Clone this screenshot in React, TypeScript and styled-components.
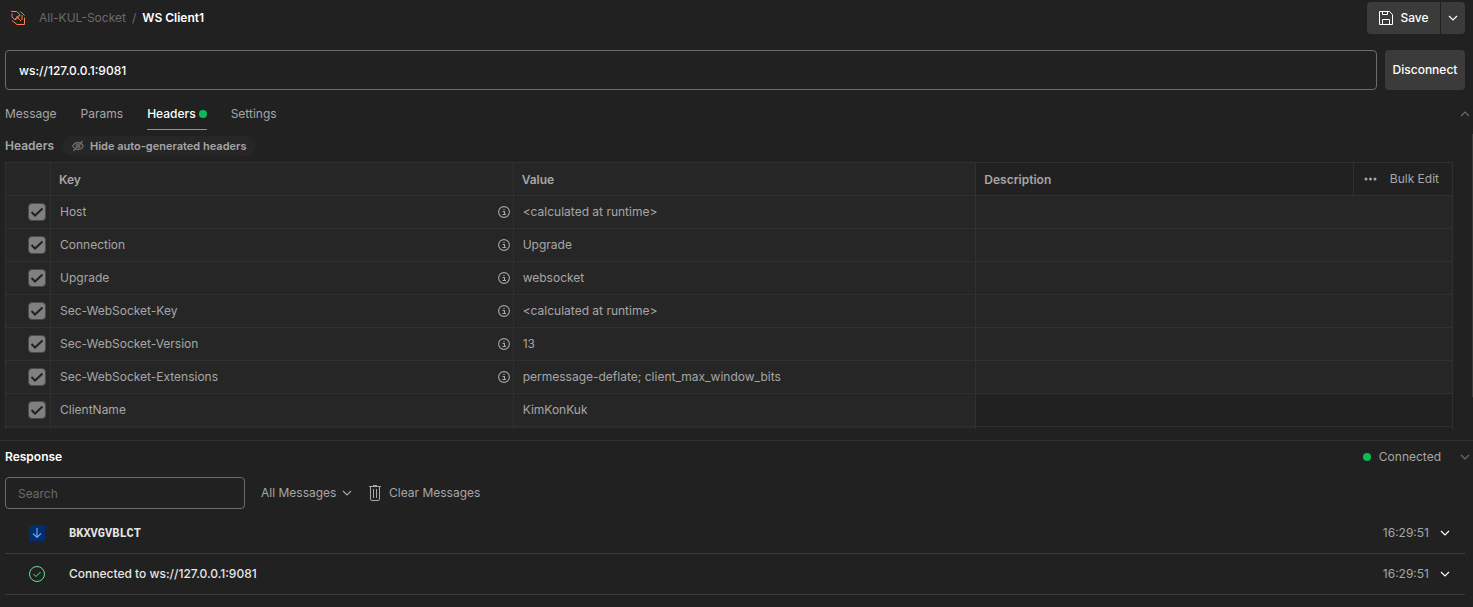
import React from 'react';
import styled, { createGlobalStyle } from 'styled-components';

const GlobalStyle = createGlobalStyle`
  *, *::before, *::after { box-sizing: border-box; }
  html { background: #212121; }
  body {
    margin: 0;
    background: #212121;
    color: #a6a6a6;
    font: 12px/20px Inter, "Liberation Sans", sans-serif;
    overflow: hidden;
  }
  button, input, select {
    font: inherit;
    color: inherit;
    background: none;
    border: 0;
    margin: 0;
    padding: 0;
  }
  button { cursor: pointer; }
  svg { display: block; flex: none; }
  h2 { margin: 0; font-size: 12px; font-weight: 600; }
`;

const Page = styled.main`
  display: flex;
  flex-direction: column;
`;

const TopBar = styled.header`
  display: flex;
  align-items: center;
  justify-content: space-between;
  height: 36px;
  padding: 0 8px 0 10px;
`;

const Breadcrumb = styled.nav`
  display: flex;
  align-items: center;
`;

const CrumbLink = styled.a`
  margin-left: 13px;
  color: #6b6b6b;
  text-decoration: none;
`;

const Slash = styled.span`
  margin: 0 6px;
  color: #6b6b6b;
`;

const Current = styled.span`
  color: #fff;
  font-weight: 600;
`;

const SaveGroup = styled.div`
  display: flex;
  gap: 1px;
`;

const SolidButton = styled.button<{ $w: number; $h: number; $radius: string }>`
  display: flex;
  align-items: center;
  justify-content: center;
  gap: 6px;
  flex: none;
  width: ${(p) => p.$w}px;
  height: ${(p) => p.$h}px;
  border-radius: ${(p) => p.$radius};
  background: #3b3b3b;
  color: #fff;
  font-weight: 500;
`;

const UrlRow = styled.form`
  display: flex;
  gap: 8px;
  padding: 14px 8px 0 5px;
`;

const TextInput = styled.input<{ $strong?: boolean }>`
  min-width: 0;
  flex: ${(p) => (p.$strong ? '1' : '0 0 240px')};
  height: ${(p) => (p.$strong ? 40 : 32)}px;
  padding: 0 ${(p) => (p.$strong ? 13 : 12)}px;
  border: 1px solid #6b6b6b;
  border-radius: 4px;
  color: #fff;
  font-weight: ${(p) => (p.$strong ? 500 : 400)};
  &::placeholder { color: #6b6b6b; opacity: 1; }
`;

const TabBar = styled.div`
  display: flex;
  align-items: center;
  justify-content: space-between;
  height: 40px;
  margin-top: 4px;
  padding: 0 3px 0 5px;
`;

const Tabs = styled.div`
  display: flex;
  gap: 24px;
`;

const Tab = styled.button<{ $active?: boolean }>`
  display: flex;
  align-items: center;
  gap: 3px;
  height: 32px;
  border-bottom: 1px solid ${(p) => (p.$active ? '#ff6c37' : 'transparent')};
  color: ${(p) => (p.$active ? '#fff' : '#a6a6a6')};
  font-weight: ${(p) => (p.$active ? 500 : 400)};
`;

const Dot = styled.span`
  width: 8px;
  height: 8px;
  border-radius: 50%;
  background: #0cbb52;
`;

const IconButton = styled.button<{ $color?: string }>`
  color: ${(p) => p.$color ?? '#6b6b6b'};
`;

const ScrollArea = styled.section`
  position: relative;
  &::after {
    content: "";
    position: absolute;
    top: 0;
    right: 0;
    width: 1px;
    height: 89%;
    background: #3b3b3b;
  }
`;

const HeadersTitle = styled.div`
  display: flex;
  align-items: center;
  gap: 8px;
  height: 28px;
  padding: 0 0 4px 5px;
`;

const Pill = styled.button`
  display: flex;
  align-items: center;
  gap: 6px;
  height: 20px;
  padding: 0 10px;
  border-radius: 10px;
  background: #262626;
  font-size: 11px;
  font-weight: 600;
  svg { color: #6b6b6b; }
`;

const TablePane = styled.div`
  display: flex;
  align-items: flex-start;
  max-height: 267px;
  padding: 0 20px 0 5px;
  overflow: hidden;
`;

const HeaderTable = styled.table`
  width: 100%;
  table-layout: fixed;
  border-collapse: collapse;
`;

const Cell = styled.td<{ $plain?: boolean }>`
  height: 33px;
  padding: 0 3px 0 9px;
  border: 1px solid #303030;
  background: ${(p) => (p.$plain ? '#212121' : '#262626')};
`;

const CheckCell = styled(Cell)`
  padding: 0 5px 0 22px;
`;

const HeadCell = styled.th<{ $plain?: boolean }>`
  height: 33px;
  padding: 2px 8px 0;
  border: 1px solid #303030;
  background: ${(p) => (p.$plain ? '#212121' : '#262626')};
  font-weight: 600;
  text-align: left;
`;

const ToolsCell = styled(HeadCell)`
  padding: 0 13px 0 10px;
`;

const Spread = styled.div`
  display: flex;
  align-items: center;
  justify-content: space-between;
`;

const QuietButton = styled.button`
  display: flex;
  align-items: center;
  gap: 8px;
  font-weight: 400;
`;

const Checkbox = styled.input`
  appearance: none;
  display: block;
  width: 18px;
  height: 18px;
  border: 1px solid #4a4a4a;
  border-radius: 4px;
  background: #808080;
`;

const CheckBoxWrap = styled.label`
  display: grid;
  width: 18px;
  > * { grid-area: 1 / 1; }
  svg { place-self: center; color: #212121; pointer-events: none; }
`;

const ResponsePane = styled.section`
  margin-top: 11px;
  border-top: 1px solid #303030;
`;

const ResponseBar = styled.div`
  display: flex;
  align-items: center;
  justify-content: space-between;
  height: 32px;
  padding: 0 3px 0 5px;
  h2 { color: #fff; }
`;

const Status = styled.div`
  display: flex;
  align-items: center;
  gap: 8px;
  button { margin-left: 11px; }
`;

const Filters = styled.div`
  display: flex;
  align-items: center;
  padding: 4px 5px;
`;

const SelectWrap = styled.div`
  display: flex;
  align-items: center;
  margin: 0 17px 0 16px;
  svg { margin-left: -10px; pointer-events: none; }
`;

const Select = styled.select`
  appearance: none;
  padding-right: 15px;
`;

const MessageList = styled.ul`
  list-style: none;
  margin: 0 8px 0 5px;
  padding: 0;
`;

const MessageRow = styled.li`
  display: flex;
  align-items: center;
  height: 41px;
  padding: 0 15px 0 24px;
  border-bottom: 1px solid #3b3b3b;
`;

const MessageText = styled.span<{ $mono?: boolean }>`
  flex: 1;
  margin-left: 24px;
  color: #e6e6e6;
  font-weight: ${(p) => (p.$mono ? 700 : 500)};
  ${(p) => p.$mono && 'padding-top: 2px; font-family: "Liberation Mono", monospace;'}
`;

const Time = styled.time`
  margin-right: 11px;
`;

const Received = styled.span`
  display: grid;
  place-items: center;
  width: 16px;
  height: 16px;
  background: #002d70;
  color: #6ba5f5;
`;

function Chevron({ up = false }: { up?: boolean }) {
  return (
    <svg width="10" height="10" viewBox="0 0 10 10" fill="none" stroke="currentColor" strokeWidth="1.2">
      <path d={up ? 'M1 7l4-4 4 4' : 'M1 3l4 4 4-4'} />
    </svg>
  );
}

function SocketIcon() {
  return (
    <svg width="16" height="16" viewBox="0 0 16 16" fill="none" stroke="#ff7f50">
      <path d="M1 1.500h5.500L9.500 4M10.500 1.500L14.500 5.500" />
      <path d="M2 3.500v3.500L4.500 9.500H6L9.800 5.800V4.500M4.500 9.500L10 4.500" />
      <path d="M6.500 6.500L11 11M12 5v5" />
      <path d="M14.500 7.500v7H7L2 10.500" />
    </svg>
  );
}

function SaveIcon() {
  return (
    <svg width="16" height="16" viewBox="0 0 16 16" fill="none" stroke="currentColor">
      <path d="M1.500 1.500h10l3 3v10h-13zM4.500 1.500v3h5v-3M4.500 14.500v-5h7v5" />
    </svg>
  );
}

function HiddenEyeIcon() {
  return (
    <svg width="12" height="12" viewBox="0 0 12 12" fill="none" stroke="currentColor" strokeWidth="1.300">
      <path d="M.7 6C2 3.600 4 2.500 6 2.500S10 3.600 11.300 6C10 8.400 8 9.500 6 9.500S2 8.400.7 6zM1.500 11L10.500 1M4.300 6.500A1.800 1.800 0 0 1 6 4.200M7.800 5.500A1.800 1.800 0 0 1 6 7.800" />
    </svg>
  );
}

function InfoIcon() {
  return (
    <svg width="12" height="12" viewBox="0 0 12 12" fill="none" stroke="currentColor" strokeWidth="1.100">
      <circle cx="6" cy="6" r="5.400" />
      <path d="M4.500 5.500h2v3M4.500 8.500h3.500M5.400 3.500h1.200" />
    </svg>
  );
}

function MoreIcon() {
  return (
    <svg width="13" height="4" viewBox="0 0 13 4" fill="currentColor">
      <circle cx="2" cy="2" r="1.500" />
      <circle cx="6.500" cy="2" r="1.500" />
      <circle cx="11" cy="2" r="1.500" />
    </svg>
  );
}

function TrashIcon() {
  return (
    <svg width="12" height="16" viewBox="0 0 12 16" fill="none" stroke="currentColor">
      <path d="M0 1.500h12M4 .5h4M1.500 2v12q0 1.500 1.500 1.500h6q1.500 0 1.500-1.500V2M4.500 4v9M7.500 4v9" />
    </svg>
  );
}

function TickIcon() {
  return (
    <svg width="14" height="12" viewBox="0 0 14 12" fill="none" stroke="currentColor" strokeWidth="2">
      <path d="M1.500 6l3.500 3.500L12.500 2.500" />
    </svg>
  );
}

function ArrowDownIcon() {
  return (
    <svg width="10" height="12" viewBox="0 0 10 12" fill="none" stroke="currentColor" strokeWidth="1.200">
      <path d="M5 1v9.500M1 6.500l4 4 4-4" />
    </svg>
  );
}

function OkIcon() {
  return (
    <svg width="16" height="16" viewBox="0 0 16 16" fill="none" stroke="#6bdd9a">
      <circle cx="8" cy="8" r="7.500" />
      <path d="M4.500 8l2.500 2.500L11.500 6" />
    </svg>
  );
}

const rows = [
  { name: 'Host', value: '<calculated at runtime>', auto: true },
  { name: 'Connection', value: 'Upgrade', auto: true },
  { name: 'Upgrade', value: 'websocket', auto: true },
  { name: 'Sec-WebSocket-Key', value: '<calculated at runtime>', auto: true },
  { name: 'Sec-WebSocket-Version', value: '13', auto: true },
  { name: 'Sec-WebSocket-Extensions', value: 'permessage-deflate; client_max_window_bits', auto: true },
  { name: 'ClientName', value: 'KimKonKuk', auto: false },
];

export default function App() {
  return (
    <Page>
      <GlobalStyle />
      <TopBar>
        <Breadcrumb aria-label="Breadcrumb">
          <SocketIcon />
          <CrumbLink href="#collection">All-KUL-Socket</CrumbLink>
          <Slash>/</Slash>
          <Current>WS Client1</Current>
        </Breadcrumb>
        <SaveGroup>
          <SolidButton type="button" $w={73} $h={32} $radius="4px 0 0 4px">
            <SaveIcon />
            Save
          </SolidButton>
          <SolidButton type="button" aria-label="More save options" $w={24} $h={32} $radius="0 4px 4px 0">
            <Chevron />
          </SolidButton>
        </SaveGroup>
      </TopBar>

      <UrlRow onSubmit={(e) => e.preventDefault()}>
        <TextInput $strong aria-label="Server URL" defaultValue="ws://127.0.0.1:9081" />
        <SolidButton type="submit" $w={80} $h={40} $radius="4px">Disconnect</SolidButton>
      </UrlRow>

      <TabBar>
        <Tabs role="tablist">
          <Tab type="button" role="tab">Message</Tab>
          <Tab type="button" role="tab">Params</Tab>
          <Tab type="button" role="tab" aria-selected $active>
            Headers
            <Dot />
          </Tab>
          <Tab type="button" role="tab">Settings</Tab>
        </Tabs>
        <IconButton type="button" aria-label="Collapse request"><Chevron up /></IconButton>
      </TabBar>

      <ScrollArea>
        <HeadersTitle>
          <h2>Headers</h2>
          <Pill type="button">
            <HiddenEyeIcon />
            Hide auto-generated headers
          </Pill>
        </HeadersTitle>

        <TablePane>
          <HeaderTable>
            <colgroup>
              <col style={{ width: 45 }} />
              <col />
              <col />
              <col style={{ width: '26.1%' }} />
              <col style={{ width: 99 }} />
            </colgroup>
            <thead>
              <tr>
                <HeadCell />
                <HeadCell>Key</HeadCell>
                <HeadCell>Value</HeadCell>
                <HeadCell $plain>Description</HeadCell>
                <ToolsCell $plain>
                  <Spread>
                    <IconButton type="button" aria-label="Column options" $color="#a6a6a6"><MoreIcon /></IconButton>
                    <QuietButton type="button">Bulk Edit</QuietButton>
                  </Spread>
                </ToolsCell>
              </tr>
            </thead>
            <tbody>
              {rows.map((row) => (
                <tr key={row.name}>
                  <CheckCell>
                    <CheckBoxWrap>
                      <Checkbox type="checkbox" defaultChecked disabled={row.auto} aria-label={row.name} />
                      <TickIcon />
                    </CheckBoxWrap>
                  </CheckCell>
                  <Cell>
                    <Spread>
                      {row.name}
                      {row.auto && <InfoIcon />}
                    </Spread>
                  </Cell>
                  <Cell>{row.value}</Cell>
                  <Cell colSpan={2} $plain={!row.auto} />
                </tr>
              ))}
              <tr>
                <CheckCell />
                <Cell />
                <Cell />
                <Cell colSpan={2} $plain />
              </tr>
            </tbody>
          </HeaderTable>
        </TablePane>
      </ScrollArea>

      <ResponsePane>
        <ResponseBar>
          <h2>Response</h2>
          <Status>
            <Dot />
            Connected
            <IconButton type="button" aria-label="Collapse response"><Chevron /></IconButton>
          </Status>
        </ResponseBar>
        <Filters>
          <TextInput type="search" aria-label="Search messages" placeholder="Search" />
          <SelectWrap>
            <Select aria-label="Message filter">
              <option>All Messages</option>
            </Select>
            <Chevron />
          </SelectWrap>
          <QuietButton type="button">
            <TrashIcon />
            Clear Messages
          </QuietButton>
        </Filters>
        <MessageList>
          <MessageRow>
            <Received><ArrowDownIcon /></Received>
            <MessageText $mono>BKXVGVBLCT</MessageText>
            <Time>16:29:51</Time>
            <IconButton type="button" aria-label="Expand message" $color="#fff"><Chevron /></IconButton>
          </MessageRow>
          <MessageRow>
            <OkIcon />
            <MessageText>Connected to ws://127.0.0.1:9081</MessageText>
            <Time>16:29:51</Time>
            <IconButton type="button" aria-label="Expand message" $color="#fff"><Chevron /></IconButton>
          </MessageRow>
        </MessageList>
      </ResponsePane>
    </Page>
  );
}
